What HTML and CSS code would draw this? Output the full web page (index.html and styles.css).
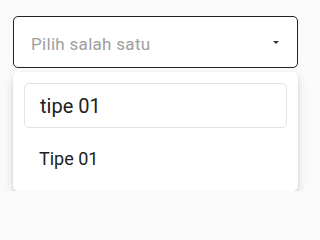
FILE: index.html
```html
<!DOCTYPE html>
<html lang="id">
<head>
<meta charset="utf-8">
<link rel="stylesheet" href="styles.css">
</head>
<body>
<div class="wrap">
  <div class="select">
    <span class="placeholder">Pilih salah satu</span>
    <svg class="caret" width="6" height="3" viewBox="0 0 6 3"><polygon points="0,0 6,0 3,3" fill="#333"/></svg>
  </div>
  <div class="panel">
    <div class="search"><span class="search-text">tipe 01</span></div>
    <div class="option">Tipe 01</div>
  </div>
</div>
</body>
</html>
```
FILE: styles.css
```css
html, body {
  margin: 0;
  padding: 0;
  background: #fafafa;
  font-family: Roboto, "Noto Sans", sans-serif;
}
.wrap {
  width: 285px;
  padding: 16px 0 0 13px;
  display: flex;
  flex-direction: column;
  gap: 4px;
}
.select {
  box-sizing: border-box;
  height: 52px;
  border: 1px solid #222;
  border-radius: 5px;
  background: #fff;
  display: flex;
  align-items: center;
  justify-content: space-between;
  padding: 3px 18px 0 17px;
}
.placeholder {
  font-size: 17px;
  line-height: 20px;
  letter-spacing: 0.3px;
  color: #9e9e9e;
}
.caret {
  display: block;
  margin-top: -3px;
}
.panel {
  box-sizing: border-box;
  height: 119px;
  background: #fff;
  border-radius: 5px;
  box-shadow: 0 5px 10px rgba(0,0,0,0.15), 0 1px 3px rgba(0,0,0,0.08);
  padding: 11px 11px 0 11px;
}
.search {
  box-sizing: border-box;
  height: 45px;
  border: 1px solid #e3e3e3;
  border-radius: 5px;
  display: flex;
  align-items: center;
  padding: 0 15px;
}
.search-text {
  font-size: 20px;
  line-height: 24px;
  color: #212121;
}
.option {
  padding: 19px 15px 0 15px;
  font-size: 18px;
  line-height: 24px;
  color: #212121;
}
```
